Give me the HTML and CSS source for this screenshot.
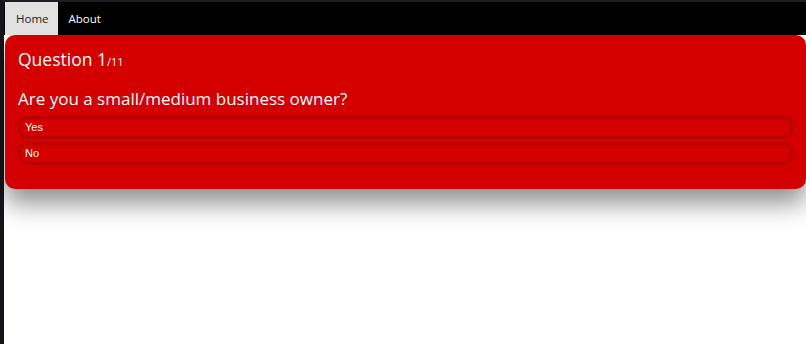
FILE: index.html
```html
<!DOCTYPE html>
<html lang="en">
<head>
    <meta charset="UTF-8">
    <meta name="viewport" content="width=device-width, initial-scale=1.0">
    <title>Quiz</title>
    <link rel="stylesheet" href="styles.css">
</head>
<body>
    <div class="frame">
        <nav class="nav">
            <a class="nav-item active" href="#">Home</a>
            <a class="nav-item" href="#">About</a>
        </nav>
        <div class="card">
            <h2 class="counter">Question 1<small>/11</small></h2>
            <h3 class="question">Are you a small/medium business owner?</h3>
            <ul class="options">
                <li>Yes</li>
                <li>No</li>
            </ul>
        </div>
    </div>
</body>
</html>
```

FILE: styles.css
```css
html, body {
    margin: 0;
    padding: 0;
    height: 100%;
    background: #fff;
    overflow: hidden;
}
.frame {
    box-sizing: border-box;
    min-height: 100%;
    border-left: 4px solid #14141b;
    border-top: 2px solid #1d1d26;
    padding-left: 1px;
    font-family: "Open Sans", "Noto Sans", sans-serif;
}
.nav {
    display: flex;
    height: 33px;
    background: #000;
    margin-left: -1px;
    padding-left: 1px;
}
.nav-item {
    display: flex;
    align-items: center;
    padding: 0 9px 0 11px;
    color: #fff;
    font-size: 11.5px;
    text-decoration: none;
}
.nav-item.active {
    background: #e1e1e1;
    color: #222;
}
.card {
    background: #d40000;
    color: #fff;
    border-radius: 10px;
    padding: 12px 13px 24px;
    box-shadow: 0 14px 26px rgba(0, 0, 0, 0.45);
}
.counter {
    margin: 0;
    font-size: 17.5px;
    font-weight: normal;
}
.counter small {
    font-size: 11px;
}
.question {
    margin: 16px 0 6px;
    font-size: 17px;
    font-weight: normal;
}
.options {
    list-style: none;
    margin: 0;
    padding: 0;
    display: flex;
    flex-direction: column;
    gap: 3px;
}
.options li {
    font-family: "Liberation Sans", Arial, sans-serif;
    font-size: 11px;
    height: 17px;
    line-height: 17px;
    padding: 0 4px;
    border: 3px solid #bb0000;
    border-radius: 9px;
}
```
